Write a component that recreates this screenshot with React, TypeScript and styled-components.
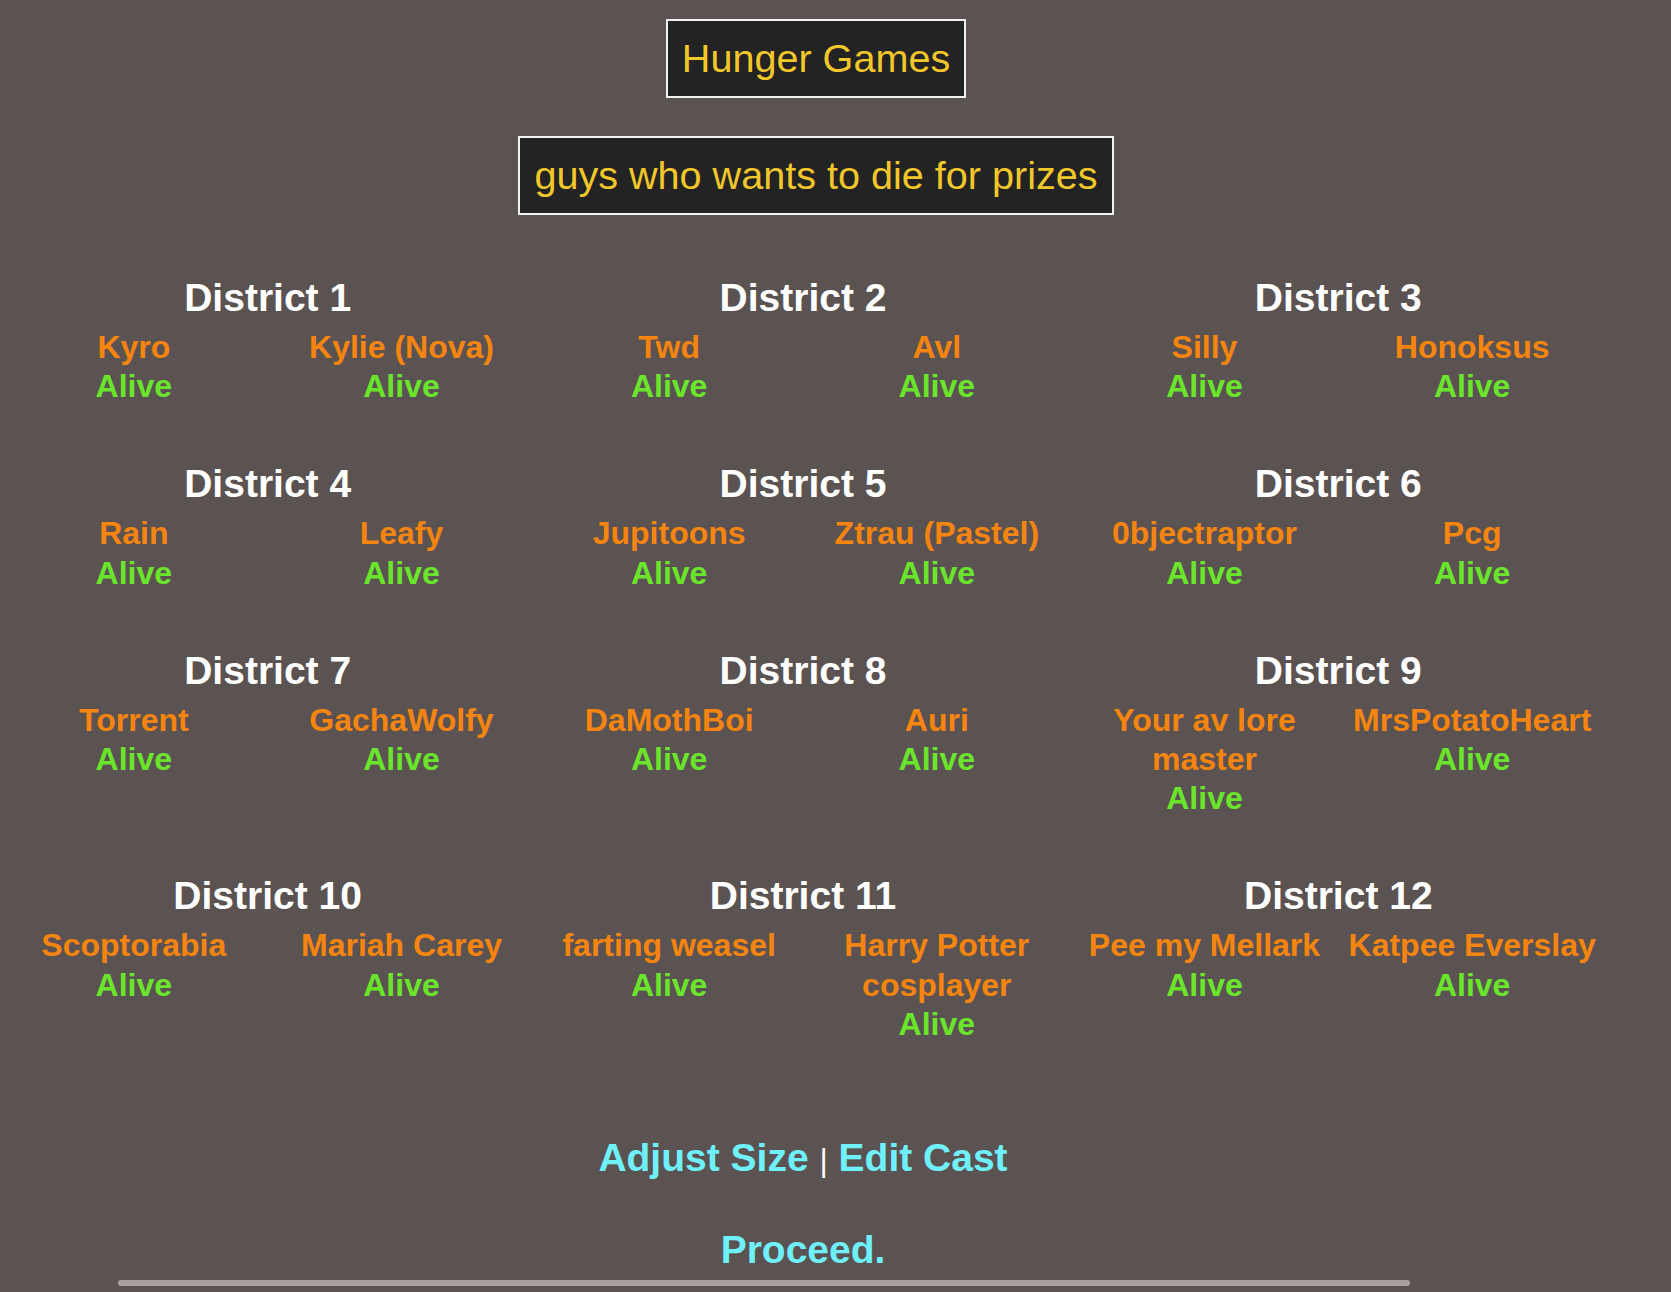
import React from "react";
import styled, { createGlobalStyle } from "styled-components";

const GlobalStyle = createGlobalStyle`
    html, body {
        margin: 0;
        padding: 0;
        background: #5b5252;
        min-height: 100%;
    }
    body {
        font-family: "Liberation Sans", Arial, Helvetica, sans-serif;
        overflow: hidden;
    }
`;

const Page = styled.div`
    width: 1606px;
    min-height: 1292px;
`;

const Header = styled.header`
    width: 1632px;
    padding-top: 19px;
    display: flex;
    flex-direction: column;
    align-items: center;
    gap: 38px;
`;

const TitleBox = styled.div`
    border: 2px solid #f2f2f2;
    background: #232323;
    color: #f2c72a;
    font-size: 39.6px;
    line-height: 45px;
    padding: 15px 14px;
    white-space: nowrap;
`;

const DistrictGrid = styled.div`
    display: grid;
    grid-template-columns: repeat(3, 535.33px);
    margin-top: 60px;
`;

const District = styled.section`
    padding-bottom: 55px;
`;

const DistrictName = styled.h2`
    margin: 0 0 8px;
    font-size: 39px;
    line-height: 45px;
    font-weight: 700;
    color: #ffffff;
    text-align: center;
`;

const Tributes = styled.div`
    display: grid;
    grid-template-columns: 1fr 1fr;
    align-items: start;
`;

const Tribute = styled.div`
    text-align: center;
    font-size: 32px;
    line-height: 39.2px;
    font-weight: 700;
`;

const Name = styled.div`
    color: #f5850f;
`;

const Status = styled.div<{ $dead?: boolean }>`
    color: ${(p) => (p.$dead ? "#e03a3a" : "#6be52b")};
`;

const Footer = styled.footer`
    margin-top: 36px;
    display: flex;
    flex-direction: column;
    align-items: center;
    gap: 44px;
    font-size: 39px;
    line-height: 45px;
    font-weight: 700;
`;

const Line = styled.div`
    white-space: pre;
    text-align: center;
`;

const Action = styled.a`
    color: #6ff0fa;
    text-decoration: none;
    cursor: pointer;
`;

const Sep = styled.span`
    color: #ffffff;
    font-size: 32px;
    font-weight: 400;
`;

const ScrollThumb = styled.div`
    position: fixed;
    left: 118px;
    top: 1280px;
    width: 1292px;
    height: 6px;
    border-radius: 3px;
    background: #aaa0a0;
`;

type Player = { name: string; alive: boolean };

const districts: Player[][] = [
    [{ name: "Kyro", alive: true }, { name: "Kylie (Nova)", alive: true }],
    [{ name: "Twd", alive: true }, { name: "Avl", alive: true }],
    [{ name: "Silly", alive: true }, { name: "Honoksus", alive: true }],
    [{ name: "Rain", alive: true }, { name: "Leafy", alive: true }],
    [{ name: "Jupitoons", alive: true }, { name: "Ztrau (Pastel)", alive: true }],
    [{ name: "0bjectraptor", alive: true }, { name: "Pcg", alive: true }],
    [{ name: "Torrent", alive: true }, { name: "GachaWolfy", alive: true }],
    [{ name: "DaMothBoi", alive: true }, { name: "Auri", alive: true }],
    [{ name: "Your av lore master", alive: true }, { name: "MrsPotatoHeart", alive: true }],
    [{ name: "Scoptorabia", alive: true }, { name: "Mariah Carey", alive: true }],
    [{ name: "farting weasel", alive: true }, { name: "Harry Potter cosplayer", alive: true }],
    [{ name: "Pee my Mellark", alive: true }, { name: "Katpee Everslay", alive: true }],
];

export default function App() {
    return (
        <>
            <GlobalStyle />
            <Page>
                <Header>
                    <TitleBox>Hunger Games</TitleBox>
                    <TitleBox>guys who wants to die for prizes</TitleBox>
                </Header>
                <DistrictGrid>
                    {districts.map((players, i) => (
                        <District key={i}>
                            <DistrictName>District {i + 1}</DistrictName>
                            <Tributes>
                                {players.map((p) => (
                                    <Tribute key={p.name}>
                                        <Name>{p.name}</Name>
                                        <Status $dead={!p.alive}>
                                            {p.alive ? "Alive" : "Deceased"}
                                        </Status>
                                    </Tribute>
                                ))}
                            </Tributes>
                        </District>
                    ))}
                </DistrictGrid>
                <Footer>
                    <Line>
                        <Action>Adjust Size</Action> <Sep>|</Sep>{" "}
                        <Action>Edit Cast</Action>
                    </Line>
                    <Line>
                        <Action>Proceed.</Action>
                    </Line>
                </Footer>
            </Page>
            <ScrollThumb />
        </>
    );
}
